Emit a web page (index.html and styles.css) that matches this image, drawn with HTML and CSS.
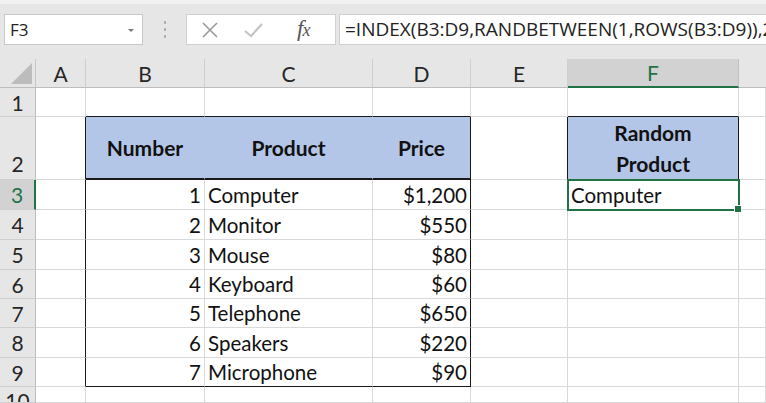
FILE: index.html
```html
<!DOCTYPE html>
<html>
<head>
<meta charset="utf-8">
<link rel="stylesheet" href="styles.css">
</head>
<body>
<div class="app">
  <div class="toolbar">
    <div class="namebox"><span class="nm">F3</span><span class="dd"></span></div>
    <div class="grip"><i></i><i></i><i></i></div>
    <div class="fbtns">
      <svg class="ico" width="22" height="22" viewBox="0 0 22 22"><path d="M4 4 L18 18 M18 4 L4 18" stroke="#9a9a9a" stroke-width="1.6" fill="none"/></svg>
      <svg class="ico" width="22" height="22" viewBox="0 0 22 22"><path d="M3 12 L9 17 L20 5" stroke="#c4c4c4" stroke-width="2.2" fill="none"/></svg>
      <span class="fx">f<span class="fxx">x</span></span>
    </div>
    <div class="formula">=INDEX(B3:D9,RANDBETWEEN(1,ROWS(B3:D9)),2)</div>
  </div>
  <div class="sheet">
    <!-- column headers -->
    <div class="corner"><span class="tri"></span></div>
    <div class="ch">A</div>
    <div class="ch">B</div>
    <div class="ch">C</div>
    <div class="ch">D</div>
    <div class="ch">E</div>
    <div class="ch sel">F</div>
    <div class="ch last"></div>

    <!-- row 1 -->
    <div class="rh">1</div>
    <div class="c"></div>
    <div class="c bb"></div>
    <div class="c bb"></div>
    <div class="c bb"></div>
    <div class="c"></div>
    <div class="c bb"></div>
    <div class="c"></div>

    <!-- row 2 -->
    <div class="rh r2">2</div>
    <div class="c br"></div>
    <div class="c hd hdin">Number</div>
    <div class="c hd hdin">Product</div>
    <div class="c hd br">Price</div>
    <div class="c br"></div>
    <div class="c hd br hdf">Random<br>Product</div>
    <div class="c"></div>

    <!-- row 3 -->
    <div class="rh selr">3</div>
    <div class="c br"></div>
    <div class="c num">1</div>
    <div class="c txt">Computer</div>
    <div class="c num br">$1,200</div>
    <div class="c"></div>
    <div class="c txt active">Computer<span class="handle"></span></div>
    <div class="c"></div>

    <!-- row 4 -->
    <div class="rh">4</div>
    <div class="c br"></div>
    <div class="c num">2</div>
    <div class="c txt">Monitor</div>
    <div class="c num br">$550</div>
    <div class="c"></div>
    <div class="c"></div>
    <div class="c"></div>

    <!-- row 5 -->
    <div class="rh">5</div>
    <div class="c br"></div>
    <div class="c num">3</div>
    <div class="c txt">Mouse</div>
    <div class="c num br">$80</div>
    <div class="c"></div>
    <div class="c"></div>
    <div class="c"></div>

    <!-- row 6 -->
    <div class="rh">6</div>
    <div class="c br"></div>
    <div class="c num">4</div>
    <div class="c txt">Keyboard</div>
    <div class="c num br">$60</div>
    <div class="c"></div>
    <div class="c"></div>
    <div class="c"></div>

    <!-- row 7 -->
    <div class="rh">7</div>
    <div class="c br"></div>
    <div class="c num">5</div>
    <div class="c txt">Telephone</div>
    <div class="c num br">$650</div>
    <div class="c"></div>
    <div class="c"></div>
    <div class="c"></div>

    <!-- row 8 -->
    <div class="rh">8</div>
    <div class="c br"></div>
    <div class="c num">6</div>
    <div class="c txt">Speakers</div>
    <div class="c num br">$220</div>
    <div class="c"></div>
    <div class="c"></div>
    <div class="c"></div>

    <!-- row 9 -->
    <div class="rh">9</div>
    <div class="c br"></div>
    <div class="c num bb">7</div>
    <div class="c txt bb">Microphone</div>
    <div class="c num br bb">$90</div>
    <div class="c"></div>
    <div class="c"></div>
    <div class="c"></div>

    <!-- row 10 -->
    <div class="rh r10">10</div>
    <div class="c"></div>
    <div class="c"></div>
    <div class="c"></div>
    <div class="c"></div>
    <div class="c"></div>
    <div class="c"></div>
    <div class="c"></div>
  </div>
</div>
</body>
</html>
```
FILE: styles.css
```css
html, body {
  margin: 0;
  padding: 0;
  background: #ffffff;
}
body {
  font-family: Lato, "Open Sans", sans-serif;
  overflow: hidden;
}
.app {
  width: 766px;
  height: 403px;
  overflow: hidden;
  background: #e6e6e6;
}
.toolbar {
  height: 59px;
  box-sizing: border-box;
  padding: 10px 0 0 4px;
  display: flex;
  align-items: flex-start;
  background: #e6e6e6;
  border-top: 4px solid #f1f1f1;
}
.namebox {
  width: 139px;
  height: 31px;
  box-sizing: border-box;
  background: #fff;
  border: 1px solid #c8c8c8;
  display: flex;
  align-items: center;
  justify-content: space-between;
  padding: 0 8px 0 5px;
  font-family: "Open Sans", "Noto Sans", sans-serif;
  font-size: 17px;
  color: #222;
}
.dd {
  width: 0;
  height: 0;
  border-left: 3px solid transparent;
  border-right: 3px solid transparent;
  border-top: 3px solid #7a7a7a;
  margin-top: 2px;
}
.grip {
  width: 43px;
  height: 31px;
  display: flex;
  flex-direction: column;
  align-items: center;
  justify-content: center;
  gap: 4px;
}
.grip i {
  display: block;
  width: 2px;
  height: 3px;
  background: #b0b0b0;
}
.fbtns {
  width: 150px;
  height: 31px;
  box-sizing: border-box;
  background: #fff;
  border: 1px solid #d0d0d0;
  display: flex;
  align-items: center;
  padding: 0 12px 0 12px;
  gap: 21px;
}
.ico {
  display: block;
}
.fx {
  font-family: "Liberation Serif", "DejaVu Serif", serif;
  font-style: italic;
  font-size: 23px;
  color: #555;
  margin-left: 12px;
  letter-spacing: -1px;
  line-height: 28px;
}
.fxx {
  font-size: 18px;
}
.formula {
  flex: 1;
  margin-left: 3px;
  height: 31px;
  box-sizing: border-box;
  background: #fff;
  border: 1px solid #d0d0d0;
  border-right: none;
  padding-left: 5px;
  font-family: "Open Sans", "Noto Sans", sans-serif;
  font-size: 19px;
  line-height: 29px;
  color: #222;
  white-space: nowrap;
  overflow: hidden;
}
.sheet {
  display: grid;
  grid-template-columns: 36px 50px 119px 168px 98px 97px 171px 1fr;
  grid-template-rows: 29px 29px 63px 30px 30px 30px 29px 29px 30px 29px 16px;
  background: #fff;
  font-size: 20.5px;
  color: #111;
}
.sheet > div {
  box-sizing: border-box;
  min-width: 0;
}
.corner {
  background: #e6e6e6;
  border-right: 1px solid #c6c6c6;
  border-bottom: 1px solid #bdbdbd;
  position: relative;
}
.tri {
  position: absolute;
  right: 3px;
  bottom: 3px;
  width: 0;
  height: 0;
  border-left: 21px solid transparent;
  border-bottom: 21px solid #bcbcbc;
}
.ch {
  background: #e6e6e6;
  border-right: 1px solid #cfcfcf;
  border-bottom: 1px solid #bdbdbd;
  display: flex;
  align-items: center;
  justify-content: center;
  color: #262626;
  font-size: 21px;
}
.ch.sel {
  background: #d2d2d2;
  color: #217346;
  border-bottom: 2px solid #217346;
  border-right: 1px solid #c0c0c0;
}
.ch.last {
  border-right: none;
}
.rh {
  background: #e6e6e6;
  border-right: 1px solid #bdbdbd;
  border-bottom: 1px solid #cfcfcf;
  display: flex;
  align-items: center;
  justify-content: center;
  color: #262626;
  font-size: 21px;
}
.rh.r2 {
  align-items: flex-end;
  padding-bottom: 3px;
}
.rh.r10 {
  align-items: flex-start;
  line-height: 24px;
  padding-top: 2px;
  overflow: hidden;
}
.rh.selr {
  background: #d2d2d2;
  color: #217346;
  border-right: 2px solid #217346;
}
.c {
  border-right: 1px solid #d9d9d9;
  border-bottom: 1px solid #d9d9d9;
  display: flex;
  align-items: flex-end;
  padding: 0 3px 2px 3px;
  white-space: nowrap;
  line-height: 24px;
}
.c.bb {
  border-bottom: 1px solid #1a1a1a;
}
.c.br {
  border-right: 1px solid #1a1a1a;
}
.c.hd {
  background: #b4c6e7;
  font-weight: 700;
  font-size: 21px;
  justify-content: center;
  align-items: center;
  text-align: center;
  border-bottom: 2px solid #1a1a1a;
  padding-bottom: 0;
  line-height: 31px;
}
.c.hdin {
  border-right: 1px solid #b4c6e7;
}
.c.hdf {
  border-bottom: 1px solid #1a1a1a;
}
.c.num {
  justify-content: flex-end;
}
.c.txt {
  justify-content: flex-start;
}
.c.active {
  position: relative;
  outline: 2px solid #217346;
  outline-offset: -1px;
  z-index: 1;
}
.handle {
  position: absolute;
  right: -4px;
  bottom: -4px;
  width: 6px;
  height: 6px;
  background: #217346;
  border: 1px solid #fff;
}
```
